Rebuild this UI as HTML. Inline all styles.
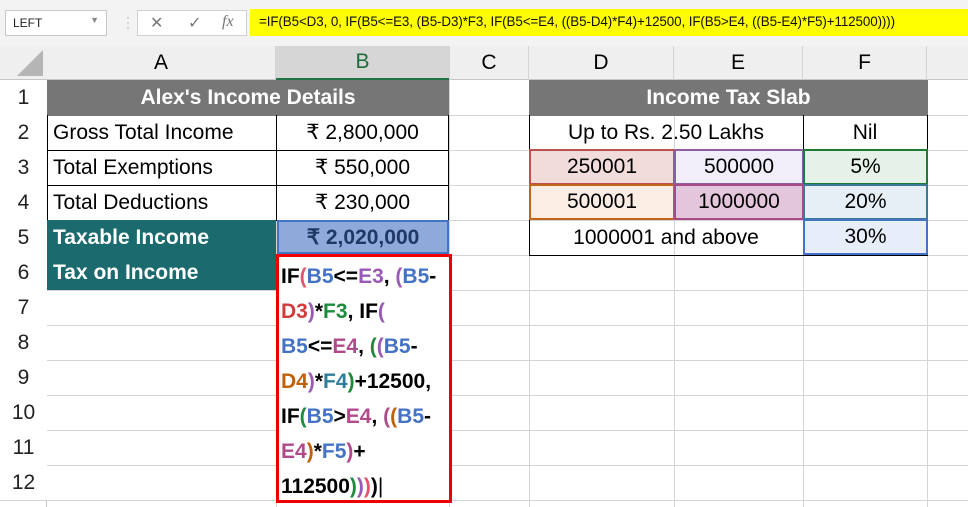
<!DOCTYPE html><html><head><style>
body{margin:0;width:968px;height:507px;background:#fff;font-family:"Liberation Sans",sans-serif;position:relative;overflow:hidden}
.a{position:absolute;box-sizing:border-box}
.c{position:absolute;box-sizing:border-box;display:flex;align-items:center;justify-content:center;font-size:21px;color:#000}
.hl{position:absolute;background:#d4d4d4}
.rh{position:absolute;left:0;width:47px;height:35px;display:flex;align-items:center;justify-content:center;font-size:21px;color:#222;background:#fff}
b{font-weight:bold}
</style></head><body>
<div class="a" style="left:0;top:0;width:968px;height:46px;background:#f3f3f3"></div>
<div class="a" style="left:5px;top:10px;width:102px;height:26px;background:#fff;border:1px solid #c8c8c8;font-size:12px;padding:5px 7px;color:#222">LEFT<span style="position:absolute;right:7px;top:4px;color:#888;font-size:9px">▼</span></div>
<div class="a" style="left:121px;top:14px;color:#bbb;font-size:14px">⋮</div>
<div class="a" style="left:137px;top:10px;width:110px;height:26px;background:#fff;border:1px solid #d0d0d0;color:#777;font-size:16px"><span style="position:absolute;left:12px;top:2px">✕</span><span style="position:absolute;left:50px;top:2px">✓</span><span style="position:absolute;left:84px;top:2px;font-style:italic;font-family:'Liberation Serif'">fx</span></div>
<div class="a" style="left:250px;top:9px;width:718px;height:27px;background:#ffff00;font-size:13.4px;padding:5px 9px;color:#111;white-space:nowrap;letter-spacing:-0.1px">=IF(B5&lt;D3, 0, IF(B5&lt;=E3, (B5-D3)*F3, IF(B5&lt;=E4, ((B5-D4)*F4)+12500, IF(B5&gt;E4, ((B5-E4)*F5)+112500))))</div>
<div class="a" style="left:0;top:46px;width:968px;height:34px;background:#efefef;border-bottom:1px solid #c6c6c6"></div>
<div class="a" style="left:17px;top:50px;width:0;height:0;border-left:26px solid transparent;border-bottom:26px solid #b5b5b5"></div>
<div class="c" style="left:47px;top:46px;width:229px;height:34px;border-right:1px solid #d4d4d4">A</div>
<div class="c" style="left:276px;top:46px;width:173px;height:34px;background:#d6d6d6;color:#1e6b3e;border-bottom:2px solid #217346">B</div>
<div class="c" style="left:449px;top:46px;width:80px;height:34px;border-left:1px solid #d4d4d4;border-right:1px solid #d4d4d4">C</div>
<div class="c" style="left:529px;top:46px;width:145px;height:34px;border-right:1px solid #d4d4d4">D</div>
<div class="c" style="left:674px;top:46px;width:129px;height:34px;border-right:1px solid #d4d4d4">E</div>
<div class="c" style="left:803px;top:46px;width:124px;height:34px;border-right:1px solid #d4d4d4">F</div>
<div class="a" style="left:46px;top:80px;width:1px;height:427px;background:#c6c6c6"></div>
<div class="hl" style="left:0;top:115px;width:968px;height:1px"></div><div class="hl" style="left:0;top:150px;width:968px;height:1px"></div><div class="hl" style="left:0;top:185px;width:968px;height:1px"></div><div class="hl" style="left:0;top:220px;width:968px;height:1px"></div><div class="hl" style="left:0;top:255px;width:968px;height:1px"></div><div class="hl" style="left:0;top:290px;width:968px;height:1px"></div><div class="hl" style="left:0;top:325px;width:968px;height:1px"></div><div class="hl" style="left:0;top:360px;width:968px;height:1px"></div><div class="hl" style="left:0;top:395px;width:968px;height:1px"></div><div class="hl" style="left:0;top:430px;width:968px;height:1px"></div><div class="hl" style="left:0;top:465px;width:968px;height:1px"></div><div class="hl" style="left:0;top:500px;width:968px;height:1px"></div>
<div class="hl" style="left:276px;top:80px;width:1px;height:427px"></div><div class="hl" style="left:449px;top:80px;width:1px;height:427px"></div><div class="hl" style="left:529px;top:80px;width:1px;height:427px"></div><div class="hl" style="left:674px;top:80px;width:1px;height:427px"></div><div class="hl" style="left:803px;top:80px;width:1px;height:427px"></div><div class="hl" style="left:927px;top:80px;width:1px;height:427px"></div>
<div class="rh" style="top:80px">1</div><div class="rh" style="top:115px">2</div><div class="rh" style="top:150px">3</div><div class="rh" style="top:185px">4</div><div class="rh" style="top:220px">5</div><div class="rh" style="top:255px">6</div><div class="rh" style="top:290px">7</div><div class="rh" style="top:325px">8</div><div class="rh" style="top:360px">9</div><div class="rh" style="top:395px">10</div><div class="rh" style="top:430px">11</div><div class="rh" style="top:465px">12</div>
<div class="c" style="left:47px;top:80px;width:402px;height:36px;background:#767676;color:#fff;font-weight:bold">Alex's Income Details</div>
<div class="a" style="left:47px;top:115px;width:402px;height:106px;border:1px solid #000;border-top:none"></div>
<div class="a" style="left:276px;top:115px;width:1px;height:106px;background:#000"></div>
<div class="a" style="left:47px;top:150px;width:402px;height:1px;background:#000"></div><div class="a" style="left:47px;top:185px;width:402px;height:1px;background:#000"></div>
<div class="c" style="left:53px;top:115px;height:35px">Gross Total Income</div><div class="c" style="left:276px;top:115px;width:173px;height:35px">₹ 2,800,000</div>
<div class="c" style="left:53px;top:150px;height:35px">Total Exemptions</div><div class="c" style="left:276px;top:150px;width:173px;height:35px">₹ 550,000</div>
<div class="c" style="left:53px;top:185px;height:35px">Total Deductions</div><div class="c" style="left:276px;top:185px;width:173px;height:35px">₹ 230,000</div>
<div class="c" style="left:47px;top:220px;width:229px;height:70px;background:#1b6a6e"></div>
<div class="c" style="left:53px;top:220px;height:35px;color:#fff;font-weight:bold">Taxable Income</div>
<div class="c" style="left:53px;top:255px;height:35px;color:#fff;font-weight:bold">Tax on Income</div>
<div class="c" style="left:277px;top:220px;width:172px;height:34px;background:#8eaadb;color:#1f3864;font-weight:bold;border:2px solid #4472c4">₹ 2,020,000</div>
<div class="a" style="left:276px;top:254px;width:176px;height:249px;border:3px solid #e00;background:#fff;font-size:21px;font-weight:bold;line-height:35px;padding:2px 0 0 2px">
<div>IF<span style="color:#e0556b">(</span><span style="color:#4472c4">B5</span>&lt;=<span style="color:#9b59b6">E3</span>, <span style="color:#9b59b6">(</span><span style="color:#4472c4">B5</span>-</div>
<div><span style="color:#d23c3c">D3</span><span style="color:#9b59b6">)</span>*<span style="color:#1e8a3c">F3</span>, IF<span style="color:#9b59b6">(</span></div>
<div><span style="color:#4472c4">B5</span>&lt;=<span style="color:#b04a8a">E4</span>, <span style="color:#1e8a3c">(</span><span style="color:#9b59b6">(</span><span style="color:#4472c4">B5</span>-</div>
<div><span style="color:#c0600a">D4</span><span style="color:#9b59b6">)</span>*<span style="color:#2e7d9a">F4</span><span style="color:#1e8a3c">)</span>+12500,</div>
<div>IF<span style="color:#1e8a3c">(</span><span style="color:#4472c4">B5</span>&gt;<span style="color:#b04a8a">E4</span>, <span style="color:#b04a8a">(</span><span style="color:#c0600a">(</span><span style="color:#4472c4">B5</span>-</div>
<div><span style="color:#b04a8a">E4</span><span style="color:#c0600a">)</span>*<span style="color:#4472c4">F5</span><span style="color:#b04a8a">)</span>+</div>
<div>112500<span style="color:#1e8a3c">)</span><span style="color:#9b59b6">)</span><span style="color:#e0556b">)</span>)<span style="font-weight:normal">|</span></div>
</div>
<div class="c" style="left:529px;top:80px;width:399px;height:36px;background:#767676;color:#fff;font-weight:bold">Income Tax Slab</div>
<div class="a" style="left:529px;top:115px;width:399px;height:141px;border:1px solid #000;border-top:none"></div>
<div class="a" style="left:803px;top:115px;width:1px;height:141px;background:#000"></div>
<div class="c" style="left:529px;top:115px;width:274px;height:35px">Up to Rs. 2.50 Lakhs</div><div class="c" style="left:803px;top:115px;width:124px;height:35px">Nil</div>
<div class="c" style="left:529px;top:149px;width:146px;height:36px;background:#f2dcdb;border:2px solid #c0504d">250001</div>
<div class="c" style="left:674px;top:149px;width:130px;height:36px;background:#f1eefa;border:2px solid #8e5ea2">500000</div>
<div class="c" style="left:803px;top:149px;width:125px;height:36px;background:#e6f1e8;border:2px solid #1e7b34">5%</div>
<div class="c" style="left:529px;top:184px;width:146px;height:36px;background:#fbece4;border:2px solid #c0651a">500001</div>
<div class="c" style="left:674px;top:184px;width:130px;height:36px;background:#e3c6dc;border:2px solid #a64a8a">1000000</div>
<div class="c" style="left:803px;top:184px;width:125px;height:36px;background:#e6eff5;border:2px solid #3a7a96">20%</div>
<div class="c" style="left:529px;top:220px;width:274px;height:35px">1000001 and above</div>
<div class="c" style="left:803px;top:219px;width:125px;height:36px;background:#e8eef9;border:2px solid #4472c4">30%</div>
</body></html>
